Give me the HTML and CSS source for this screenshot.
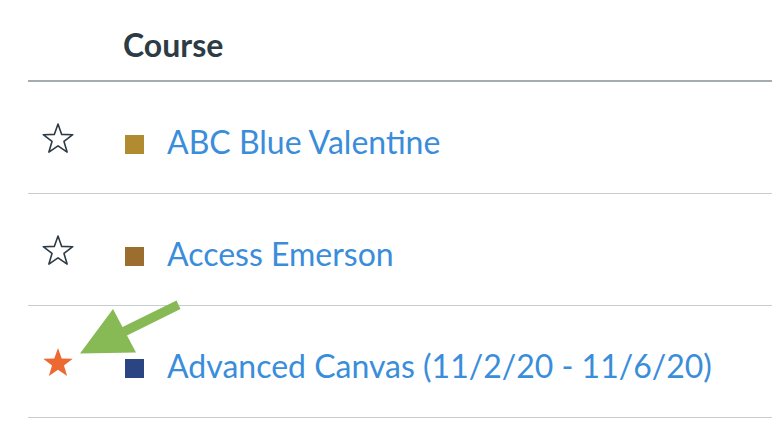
FILE: index.html
```html
<!DOCTYPE html>
<html>
<head>
<meta charset="utf-8">
<link rel="stylesheet" href="styles.css">
</head>
<body>
<div class="page">
  <div class="table">
    <div class="row head">
      <div class="c-star"></div>
      <div class="c-name"><span class="title">Course</span></div>
    </div>
    <div class="row">
      <div class="c-star">
        <svg class="star" viewBox="0 0 32 30"><polygon class="outline" points="16,1 19.7,11.4 30.74,11.71 21.99,18.45 25.11,29.04 16,22.8 6.89,29.04 10.01,18.45 1.26,11.71 12.3,11.4"/></svg>
      </div>
      <div class="c-name"><span class="swatch" style="background:#b08b2f"></span><a class="link">ABC Blue Valentine</a></div>
    </div>
    <div class="row">
      <div class="c-star">
        <svg class="star" viewBox="0 0 32 30"><polygon class="outline" points="16,1 19.7,11.4 30.74,11.71 21.99,18.45 25.11,29.04 16,22.8 6.89,29.04 10.01,18.45 1.26,11.71 12.3,11.4"/></svg>
      </div>
      <div class="c-name"><span class="swatch" style="background:#9b6e30"></span><a class="link">Access Emerson</a></div>
    </div>
    <div class="row">
      <div class="c-star">
        <svg class="star" viewBox="0 0 32 30"><polygon class="filled" points="16,1 19.7,11.4 30.74,11.71 21.99,18.45 25.11,29.04 16,22.8 6.89,29.04 10.01,18.45 1.26,11.71 12.3,11.4"/></svg>
      </div>
      <div class="c-name"><span class="swatch" style="background:#2b4583"></span><a class="link">Advanced Canvas (11/2/20 - 11/6/20)</a></div>
    </div>
  </div>
  <svg class="arrow" viewBox="0 0 772 434" width="772" height="434">
    <polygon points="80,353.5 113,309 122.5,327 176.5,300.5 180.5,309 127,335.5 136,352.5" fill="#87b955"/>
  </svg>
</div>
</body>
</html>
```
FILE: styles.css
```css
html, body {
  margin: 0;
  padding: 0;
  background: #ffffff;
}
body {
  font-family: Lato, "Open Sans", sans-serif;
  width: 772px;
  height: 434px;
  overflow: hidden;
}
.page {
  position: relative;
  width: 772px;
  height: 434px;
}
.table {
  margin-left: 28px;
  width: 744px;
}
.row {
  display: grid;
  grid-template-columns: 95px 1fr;
  align-items: center;
  height: 111px;
  border-bottom: 1px solid #c7cdd1;
}
.row.head {
  height: 80px;
  border-bottom: 2px solid #a5acb0;
  align-items: start;
}
.title {
  display: block;
  padding-top: 26px;
  font-size: 32px;
  font-weight: 700;
  color: #2d3b45;
  line-height: 38px;
}
.c-star {
  padding-left: 14px;
  display: flex;
  align-items: center;
}
.star {
  width: 32px;
  height: 30px;
  display: block;
}
.outline {
  fill: none;
  stroke: #2d3b45;
  stroke-width: 1.6;
  stroke-linejoin: round;
}
.filled {
  fill: #ec6a31;
}
.c-name {
  display: flex;
  align-items: center;
}
.swatch {
  width: 19px;
  height: 19px;
  margin-left: 2px;
  margin-right: 23px;
  margin-top: 14px;
  flex: none;
}
.link {
  font-size: 32px;
  color: #3a8ddb;
  line-height: 38px;
  margin-top: 9px;
  white-space: nowrap;
}
.arrow {
  position: absolute;
  left: 0;
  top: 0;
  pointer-events: none;
}
```
